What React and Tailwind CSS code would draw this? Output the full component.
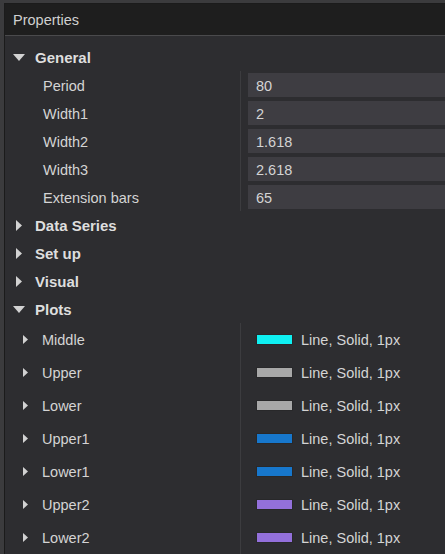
const generalRows = [
  { label: "Period", value: "80" },
  { label: "Width1", value: "2" },
  { label: "Width2", value: "1.618" },
  { label: "Width3", value: "2.618" },
  { label: "Extension bars", value: "65" },
];

const plots = [
  { label: "Middle", color: "bg-[#0ff0f2]" },
  { label: "Upper", color: "bg-[#a8a8a8]" },
  { label: "Lower", color: "bg-[#a8a8a8]" },
  { label: "Upper1", color: "bg-[#1777cc]" },
  { label: "Lower1", color: "bg-[#1777cc]" },
  { label: "Upper2", color: "bg-[#9370db]" },
  { label: "Lower2", color: "bg-[#9370db]" },
];

function CaretDown() {
  return (
    <svg width="12" height="7" viewBox="0 0 12 7" className="shrink-0">
      <path d="M0 0 L12 0 L6 7 Z" fill="#d2d2d2" />
    </svg>
  );
}

function CaretRight({ small }) {
  return small ? (
    <svg width="5" height="9" viewBox="0 0 5 9" className="shrink-0">
      <path d="M0 0 L5 4.5 L0 9 Z" fill="#d2d2d2" />
    </svg>
  ) : (
    <svg width="6" height="11" viewBox="0 0 6 11" className="shrink-0">
      <path d="M0 0 L6 5.5 L0 11 Z" fill="#d2d2d2" />
    </svg>
  );
}

function Group({ title, open }) {
  return (
    <div className="h-[28px] flex items-center">
      {open ? (
        <div className="w-[30px] pl-[8px] flex items-center">
          <CaretDown />
        </div>
      ) : (
        <div className="w-[30px] pl-[11px] flex items-center">
          <CaretRight />
        </div>
      )}
      <span className="pt-[2px] text-[15px] font-bold text-[#dedede]">{title}</span>
    </div>
  );
}

export default function App() {
  return (
    <div
      className="w-[445px] h-[554px] bg-[#3b3b3d] pt-[3px] pl-[4px] overflow-hidden"
      style={{ fontFamily: '"Liberation Sans", Arial, sans-serif' }}
    >
      <div className="h-full bg-[#2d2d30] border-l border-t border-[#1b1b1b]">
        <div className="h-[32px] bg-[#1e1e1e] border-b border-[#4a4a4c] flex items-center pl-[8px]">
          <span className="pt-[3px] text-[14.5px] text-[#d0d0d0]">Properties</span>
        </div>

        <div className="pt-[7px]">
          <Group title="General" open />
          <div>
            {generalRows.map(row => (
              <div key={row.label} className="h-[28px] flex">
                <div className="w-[236px] border-r border-[#3c3c3f] flex items-center pl-[38px]">
                  <span className="pt-[3px] text-[14.5px] text-[#d4d4d4]">{row.label}</span>
                </div>
                <div className="flex-1 pl-[7px] py-[2px]">
                  <div className="h-full bg-[#3e3d42] flex items-center pl-[8px]">
                    <span className="pt-[3px] text-[14.5px] text-[#d4d4d4]">{row.value}</span>
                  </div>
                </div>
              </div>
            ))}
          </div>

          <Group title="Data Series" />
          <Group title="Set up" />
          <Group title="Visual" />
          <Group title="Plots" open />

          <div>
            {plots.map(plot => (
              <div key={plot.label} className="h-[33px] flex">
                <div className="w-[236px] border-r border-[#3c3c3f] flex items-center pl-[18px]">
                  <CaretRight small />
                  <span className="ml-[14px] pt-[2px] text-[14.5px] text-[#d4d4d4]">{plot.label}</span>
                </div>
                <div className="flex-1 flex items-center pl-[15px]">
                  <div className={`w-[37px] h-[11px] border border-[#28282a] ${plot.color}`} />
                  <span className="ml-[8px] pt-[2px] text-[14.5px] text-[#d4d4d4]">Line, Solid, 1px</span>
                </div>
              </div>
            ))}
          </div>
        </div>
      </div>
    </div>
  );
}
